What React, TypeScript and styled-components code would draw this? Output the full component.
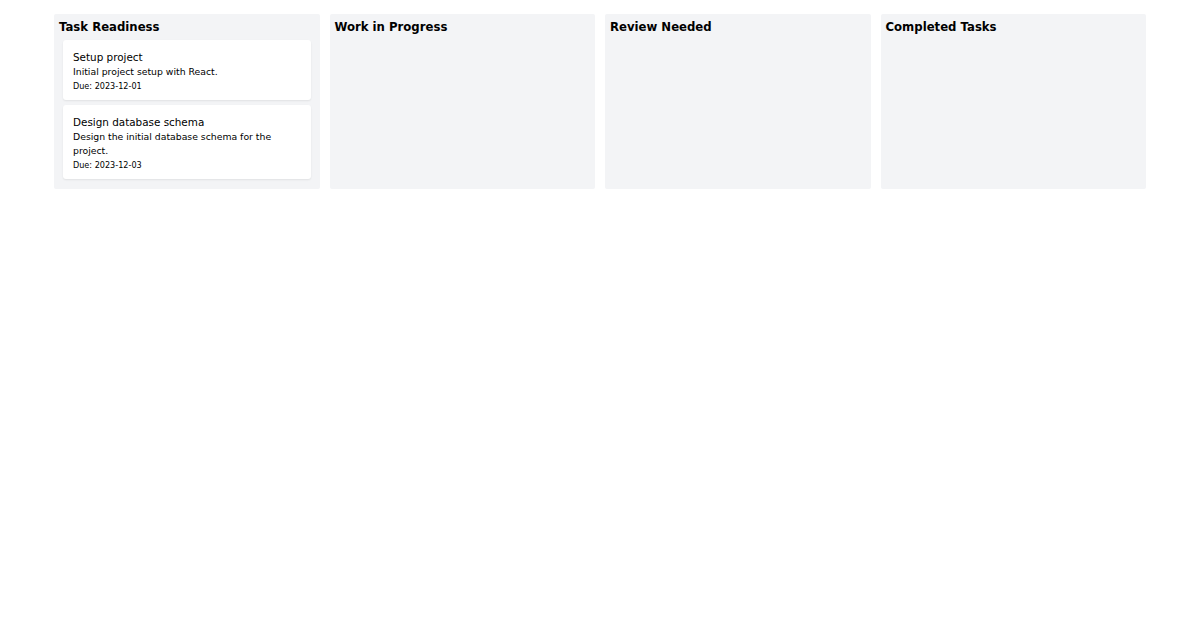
import styled, { createGlobalStyle } from 'styled-components'

const GlobalStyle = createGlobalStyle`
  html, body {
    margin: 0;
    padding: 0;
    background: #ffffff;
    font-family: "DejaVu Sans", Verdana, sans-serif;
    color: #000000;
  }
`

const Board = styled.div`
  display: flex;
  gap: 10px;
  max-width: 1092px;
  margin: 14px auto 0;
`

const Column = styled.section`
  flex: 1 1 0;
  min-width: 0;
  padding: 5px 5px 6px;
  background-color: #f3f4f6;
  border-radius: 2px;
`

const ColumnTitle = styled.h2`
  margin: 1.4px 0 2px;
  font-size: 11.7px;
  font-weight: 700;
  line-height: normal;
`

const CardList = styled.div`
  display: flex;
  flex-direction: column;
  gap: 5px;
  padding: 4px;
`

const Card = styled.article`
  padding: 10px 10px 9px;
  background-color: #ffffff;
  border-radius: 3px;
  box-shadow: 0 1px 2px rgba(0, 0, 0, 0.08);
`

const CardTitle = styled.h3`
  margin: 0 0 1px;
  font-size: 10.4px;
  font-weight: 400;
  line-height: 14px;
`

const CardText = styled.p`
  margin: 0;
  font-size: 9.3px;
  line-height: 14px;
`

const DueDate = styled.p`
  margin: 2px 0 0;
  font-size: 8.1px;
  line-height: 10px;
`

type Task = {
  id: number
  title: string
  description: string
  due: string
}

type ColumnData = {
  id: string
  title: string
  tasks: Task[]
}

const columns: ColumnData[] = [
  {
    id: 'ready',
    title: 'Task Readiness',
    tasks: [
      { id: 1, title: 'Setup project', description: 'Initial project setup with React.', due: '2023-12-01' },
      {
        id: 2,
        title: 'Design database schema',
        description: 'Design the initial database schema for the project.',
        due: '2023-12-03',
      },
    ],
  },
  { id: 'progress', title: 'Work in Progress', tasks: [] },
  { id: 'review', title: 'Review Needed', tasks: [] },
  { id: 'done', title: 'Completed Tasks', tasks: [] },
]

export default function App() {
  return (
    <>
      <GlobalStyle />
      <Board>
        {columns.map((column) => (
          <Column key={column.id}>
            <ColumnTitle>{column.title}</ColumnTitle>
            <CardList>
              {column.tasks.map((task) => (
                <Card key={task.id}>
                  <CardTitle>{task.title}</CardTitle>
                  <CardText>{task.description}</CardText>
                  <DueDate>Due: {task.due}</DueDate>
                </Card>
              ))}
            </CardList>
          </Column>
        ))}
      </Board>
    </>
  )
}
